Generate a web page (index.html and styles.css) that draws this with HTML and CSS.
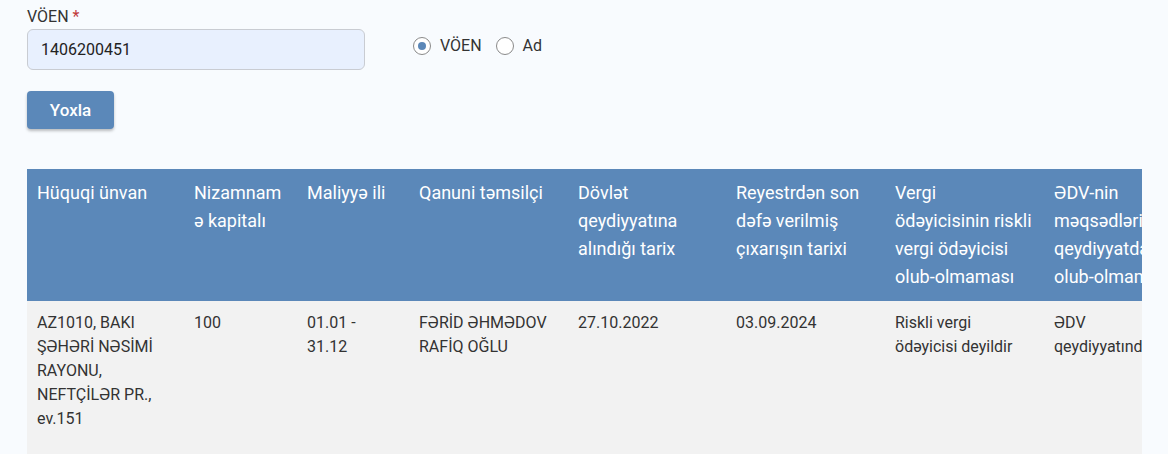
FILE: index.html
```html
<!DOCTYPE html>
<html lang="az">
<head>
<meta charset="utf-8">
<link rel="stylesheet" href="styles.css">
</head>
<body>
<div class="page">
  <div class="form-row">
    <div class="field">
      <label class="label">VÖEN <span class="req">*</span></label>
      <div class="input">1406200451</div>
    </div>
    <div class="radios">
      <span class="radio checked"></span><span class="radio-label">VÖEN</span>
      <span class="radio"></span><span class="radio-label">Ad</span>
    </div>
  </div>
  <button class="btn">Yoxla</button>
  <div class="table-wrap">
    <table class="tbl">
      <colgroup>
        <col class="c1"><col class="c2"><col class="c3"><col class="c4"><col class="c5"><col class="c6"><col class="c7"><col class="c8">
      </colgroup>
      <thead>
        <tr>
          <th>Hüquqi ünvan</th>
          <th>Nizamnamə kapitalı</th>
          <th>Maliyyə ili</th>
          <th>Qanuni təmsilçi</th>
          <th>Dövlət qeydiyyatına alındığı tarix</th>
          <th>Reyestrdən son dəfə verilmiş çıxarışın tarixi</th>
          <th>Vergi ödəyicisinin riskli vergi ödəyicisi olub-olmaması</th>
          <th>ƏDV-nin məqsədləri qeydiyyatda olub-olmaması</th>
        </tr>
      </thead>
      <tbody>
        <tr>
          <td>AZ1010, BAKI ŞƏHƏRİ NƏSİMİ RAYONU, NEFTÇİLƏR PR., ev.151</td>
          <td>100</td>
          <td>01.01 -<br>31.12</td>
          <td>FƏRİD ƏHMƏDOV RAFİQ OĞLU</td>
          <td>27.10.2022</td>
          <td>03.09.2024</td>
          <td>Riskli vergi ödəyicisi deyildir</td>
          <td>ƏDV qeydiyyatındadır</td>
        </tr>
      </tbody>
    </table>
  </div>
</div>
</body>
</html>
```
FILE: styles.css
```css
html, body {
  margin: 0;
  padding: 0;
  background: #f8fbfe;
  font-family: Roboto, "Liberation Sans", sans-serif;
  color: #333;
}
.page {
  padding: 8px 26px 0 27px;
}
.form-row {
  display: flex;
  align-items: flex-start;
}
.field {
  display: flex;
  flex-direction: column;
}
.label {
  font-size: 16px;
  line-height: 18px;
  height: 21px;
  color: #333;
}
.req {
  color: #c0393b;
}
.input {
  box-sizing: border-box;
  width: 338px;
  height: 41px;
  border: 1px solid #c9ccd2;
  border-radius: 6px;
  background: #e8f0fe;
  padding: 0 13px;
  font-size: 16px;
  line-height: 39px;
  color: #222;
}
.radios {
  display: flex;
  align-items: center;
  margin-left: 48px;
  margin-top: 29px;
  font-size: 16px;
  line-height: 18px;
  color: #333;
}
.radio {
  box-sizing: border-box;
  width: 18px;
  height: 18px;
  border: 1.5px solid #8a8a8a;
  border-radius: 50%;
  background: #fff;
  display: flex;
  align-items: center;
  justify-content: center;
  margin-right: 9px;
}
.radio.checked::after {
  content: "";
  width: 8px;
  height: 8px;
  border-radius: 50%;
  background: #5b87b8;
}
.radio-label {
  margin-right: 14px;
}
.btn {
  display: block;
  margin-top: 21px;
  width: 87px;
  height: 38px;
  border: none;
  border-radius: 4px;
  background: #5b88b9;
  color: #fff;
  font-family: Roboto, "Liberation Sans", sans-serif;
  font-size: 17px;
  font-weight: 500;
  box-shadow: 0 2px 3px rgba(0, 0, 0, 0.25);
  padding: 0;
}
.table-wrap {
  margin-top: 40px;
  width: 1115px;
  overflow: hidden;
}
.tbl {
  border-collapse: collapse;
  table-layout: fixed;
  width: 1176px;
}
.c1 { width: 157px; }
.c2 { width: 113px; }
.c3 { width: 112px; }
.c4 { width: 159px; }
.c5 { width: 158px; }
.c6 { width: 159px; }
.c7 { width: 159px; }
.c8 { width: 159px; }
.tbl th, .tbl td {
  text-align: left;
  vertical-align: top;
  padding: 10px 10px;
  overflow-wrap: anywhere;
}
.tbl th {
  background: #5b88b9;
  color: #fff;
  font-weight: 400;
  font-size: 18px;
  line-height: 28px;
  height: 112px;
}
.tbl td {
  background: #f2f2f2;
  color: #333;
  font-size: 16px;
  line-height: 24px;
  height: 150px;
}
```
